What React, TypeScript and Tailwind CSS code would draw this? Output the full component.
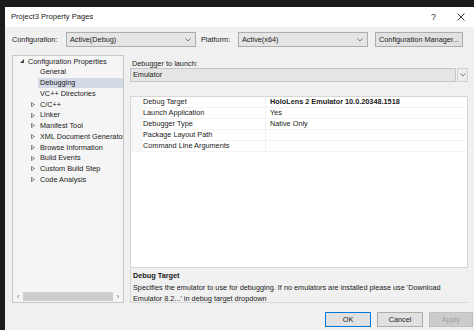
const font = "font-['Liberation_Sans','Noto_Sans',sans-serif]";

const tree: { label: string; depth: 0 | 1; arrow?: "open" | "closed"; selected?: boolean }[] = [
  { label: "Configuration Properties", depth: 0, arrow: "open" },
  { label: "General", depth: 1 },
  { label: "Debugging", depth: 1, selected: true },
  { label: "VC++ Directories", depth: 1 },
  { label: "C/C++", depth: 1, arrow: "closed" },
  { label: "Linker", depth: 1, arrow: "closed" },
  { label: "Manifest Tool", depth: 1, arrow: "closed" },
  { label: "XML Document Generator", depth: 1, arrow: "closed" },
  { label: "Browse Information", depth: 1, arrow: "closed" },
  { label: "Build Events", depth: 1, arrow: "closed" },
  { label: "Custom Build Step", depth: 1, arrow: "closed" },
  { label: "Code Analysis", depth: 1, arrow: "closed" },
];

const props: [string, string, boolean?][] = [
  ["Debug Target", "HoloLens 2 Emulator 10.0.20348.1518", true],
  ["Launch Application", "Yes"],
  ["Debugger Type", "Native Only"],
  ["Package Layout Path", ""],
  ["Command Line Arguments", ""],
];

export default function App() {
  return (
    <div className={`${font} w-[474px] h-[330px] overflow-hidden bg-[#1c1c1c] pl-[5px] pt-[7px] flex text-[7.3px] leading-none text-[#1a1a1a] whitespace-nowrap`}>
      <div className="flex-1 flex flex-col bg-[#f0f0f0]">
        {/* title bar */}
        <div className="h-[20px] bg-white flex items-center pl-[6px] shrink-0">
          <span className="text-[7.6px]">Project3 Property Pages</span>
          <span className="ml-auto mr-[21px] text-[9px] text-[#333]">?</span>
          <Close />
        </div>

        {/* configuration row */}
        <div className="mt-[5px] h-[15px] flex items-center pl-[7px] shrink-0">
          <span className="w-[54px]">Configuration:</span>
          <Combo value="Active(Debug)" width="w-[130px]" />
          <span className="ml-[5px] w-[37px]">Platform:</span>
          <Combo value="Active(x64)" width="w-[130px]" />
          <button className="ml-[7px] w-[88px] h-[15px] bg-[#e1e1e1] border border-[#adadad] flex items-center justify-center">
            Configuration Manager...
          </button>
        </div>

        {/* main area */}
        <div className="mt-[8px] flex pl-[7px] shrink-0">
          <TreePanel />
          <div className="ml-[6px] w-[338px] flex flex-col">
            <div className="h-[13px] flex items-end pl-[2px] pb-[1px]">Debugger to launch:</div>
            <div className="h-[14px] flex">
              <div className="flex-1 bg-[#e5e5e5] border border-[#c5c5c5] flex items-center pl-[2px]">Emulator</div>
              <div className="ml-[1px] w-[11px] bg-[#ededed] border border-[#d0d0d0] flex items-center justify-center">
                <Chevron />
              </div>
            </div>
            <div className="mt-[14px] h-[172px] bg-white border border-[#d6d6d6] flex flex-col">
              {props.map(([k, v, bold]) => (
                <div key={k} className="h-[11px] flex border-b border-[#f3f3f3]">
                  <div className="w-[12px] bg-[#f7f7f7]" />
                  <div className="w-[123px] flex items-center border-r border-[#f0f0f0]">{k}</div>
                  <div className={`flex-1 flex items-center pl-[4px] ${bold ? "font-bold" : ""}`}>{v}</div>
                </div>
              ))}
            </div>
            <div className="h-[35px] border-l border-b border-[#d6d6d6] pl-[2px] pt-[4px] flex flex-col">
              <div className="font-bold">Debug Target</div>
              <div className="mt-[3px] leading-[11px]">
                Specifies the emulator to use for debugging. If no emulators are installed please use 'Download
                <br />
                Emulator 8.2...' in debug target dropdown
              </div>
            </div>
          </div>
        </div>

        {/* buttons */}
        <div className="mt-[9px] flex justify-end gap-[6px] pr-[1px] shrink-0">
          <button className="w-[46px] h-[15px] bg-[#e1e1e1] border border-[#0078d7] flex items-center justify-center">OK</button>
          <button className="w-[46px] h-[15px] bg-[#e1e1e1] border border-[#adadad] flex items-center justify-center">Cancel</button>
          <button className="w-[44px] h-[15px] bg-[#cccccc] border border-[#bfbfbf] text-[#a0a0a0] flex items-center justify-center">Apply</button>
        </div>
      </div>
    </div>
  );
}

function Combo({ value, width }: { value: string; width: string }) {
  return (
    <div className={`${width} h-[15px] bg-[#e5e5e5] border border-[#adadad] flex items-center pl-[3px] pr-[4px]`}>
      <span>{value}</span>
      <span className="ml-auto">
        <Chevron />
      </span>
    </div>
  );
}

function Chevron() {
  return (
    <svg width="6" height="4" viewBox="0 0 6 4">
      <path d="M0.5 0.5 L3 3 L5.5 0.5" fill="none" stroke="#606060" strokeWidth="0.8" />
    </svg>
  );
}

function Close() {
  return (
    <svg width="8" height="8" viewBox="0 0 8 8" className="mr-[9px]">
      <path d="M0.5 0.5 L7.5 7.5 M7.5 0.5 L0.5 7.5" stroke="#222" strokeWidth="0.9" />
    </svg>
  );
}

function TreePanel() {
  return (
    <div className="w-[112px] h-[248px] bg-[#f5f5f5] border border-[#c8c8c8] flex flex-col overflow-hidden">
      <div className="flex-1">
        {tree.map((t) => (
          <div key={t.label} className="h-[10.75px] flex items-center">
            {t.depth === 0 ? (
              <>
                <span className="w-[15px] flex justify-end pr-[4px]">
                  <svg width="4" height="4" viewBox="0 0 4 4">
                    <path d="M4 0 L4 4 L0 4 Z" fill="#444" />
                  </svg>
                </span>
                <span>{t.label}</span>
              </>
            ) : (
              <>
                <span className="w-[25px] shrink-0 flex justify-end pr-[3px]">
                  {t.arrow === "closed" && (
                    <svg width="4" height="5" viewBox="0 0 4 5">
                      <path d="M0.5 0.5 L3.5 2.5 L0.5 4.5 Z" fill="none" stroke="#555" strokeWidth="0.7" />
                    </svg>
                  )}
                </span>
                <span className={`h-full flex items-center pl-[2px] w-[85px] shrink-0 ${t.selected ? "bg-[#d4d9e6]" : ""}`}>{t.label}</span>
              </>
            )}
          </div>
        ))}
      </div>
      <div className="h-[10px] mb-[1px] flex items-center px-[4px]">
        <span className="text-[7px] text-[#555] w-[6px]">‹</span>
        <div className="flex-1 h-[9px] bg-[#cdcdcd]" />
        <span className="text-[7px] text-[#555] w-[6px] text-right">›</span>
      </div>
    </div>
  );
}
